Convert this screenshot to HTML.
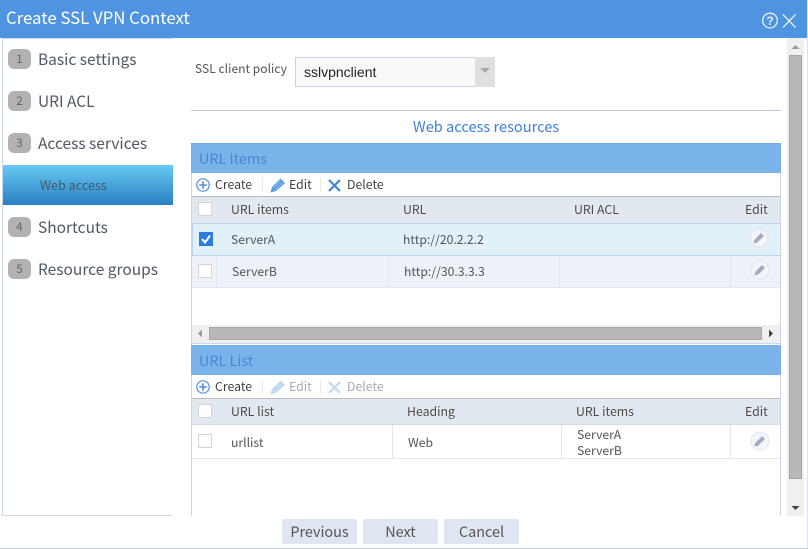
<!DOCTYPE html>
<html><head><meta charset="utf-8">
<style>
html,body{margin:0;padding:0;background:#fff;}
#p{position:relative;width:808px;height:549px;overflow:hidden;background:#fff;font-family:"Noto Sans CJK SC","Liberation Sans",sans-serif;color:#555;}
#p div,#p svg{position:absolute;}
.t{white-space:nowrap;line-height:20px;height:20px;}
.nav{font-size:15.5px;color:#4f5a66;left:38px;}
.b{left:8px;width:23px;height:20px;border-radius:6px;background:#b2b2b2;color:#666;font-size:12px;line-height:20px;text-align:center;}
.h{font-size:12.3px;color:#4c4c4c;}
.c{font-size:12.2px;color:#555;}
.tb{font-size:12.3px;color:#444;}
.dis{color:#aaa;}
.cb{width:12px;height:12px;border:1px solid #d5d5d5;background:#fff;}
.sep{width:1px;height:14px;background:#e8e8e8;}
.v{width:1px;background:#e2e5ea;}
.btn{top:519px;width:75px;height:25px;background:#dfe5f1;border-radius:2px;text-align:center;font-size:14.4px;line-height:26px;color:#555;}
</style></head><body><div id="p">

<div style="left:0;top:0;width:807px;height:38px;background:#4f94e0"></div>
<div style="left:807px;top:0;width:1px;height:549px;background:#dde3ee"></div>
<div class="t" style="left:6px;top:6px;font-size:16.8px;line-height:22px;height:22px;color:#fff">Create SSL VPN Context</div>
<svg style="left:761px;top:12px" width="36" height="17" viewBox="0 0 36 17">
<circle cx="9" cy="8.5" r="7.3" fill="none" stroke="#e6f0fb" stroke-width="1.3"/>
<text x="9" y="13" font-size="12" font-weight="bold" text-anchor="middle" fill="#e6f0fb" font-family="Liberation Sans">?</text>
<path d="M22 2.5L34.5 15.5M34.5 2.5L22 15.5" stroke="#fff" stroke-width="1.2" fill="none"/>
</svg>

<!-- left nav -->
<div style="left:2px;top:38px;width:171px;height:1px;background:#cfd6e6"></div>
<div style="left:2px;top:38px;width:1px;height:478px;background:#cfd6e6"></div>
<div style="left:2px;top:515px;width:171px;height:1px;background:#cfd6e6"></div>
<div class="b" style="top:49px">1</div><div class="t nav" style="top:49px">Basic settings</div>
<div class="b" style="top:91px">2</div><div class="t nav" style="top:91px">URI ACL</div>
<div class="b" style="top:133px">3</div><div class="t nav" style="top:133px">Access services</div>
<div style="left:3px;top:165px;width:170px;height:40px;background:linear-gradient(#68c9f3,#2a7fc2)"></div>
<div class="t" style="left:40px;top:175px;font-size:12.6px;color:#44586c">Web access</div>
<div class="b" style="top:217px">4</div><div class="t nav" style="top:217px">Shortcuts</div>
<div class="b" style="top:259px">5</div><div class="t nav" style="top:259px">Resource groups</div>

<!-- form -->
<div class="t" style="left:195px;top:59px;font-size:12.1px;color:#555">SSL client policy</div>
<div style="left:295px;top:57px;width:188px;height:28px;border:1px solid #c6d3e6;background:#f9f9f9"></div>
<div class="t" style="left:304px;top:62px;font-family:'Liberation Sans',sans-serif;font-size:14px;color:#222">sslvpnclient</div>
<div style="left:475px;top:57px;width:20px;height:30px;background:#e0e0e0"></div>
<svg style="left:479px;top:67px" width="12" height="8"><path d="M1 1H11L6 6Z" fill="#aaa"/></svg>
<div style="left:191px;top:110px;width:590px;height:1px;background:#b9cce4"></div>
<div class="t" style="left:191px;width:590px;text-align:center;top:117px;font-size:14.6px;color:#3f7fdc">Web access resources</div>

<!-- URL items panel -->
<div style="left:191px;top:143px;width:590px;height:30px;background:#7ab3ea;border-top:1px solid #72aae0;box-sizing:border-box"></div>
<div class="t" style="left:199px;top:149px;font-size:14.4px;color:#4a84d6">URL Items</div>
<div style="left:191px;top:173px;width:1px;height:172px;background:#cbd6ee"></div>
<div style="left:780px;top:173px;width:1px;height:172px;background:#cbd6ee"></div>
<div style="left:191px;top:343px;width:590px;height:1px;background:#cbd6ee"></div>

<svg style="left:196px;top:178px" width="14" height="14"><circle cx="7" cy="7" r="6.2" fill="none" stroke="#4f8fdc" stroke-width="1.2"/><path d="M7 3.2V10.8M3.2 7H10.8" stroke="#4f8fdc" stroke-width="1.6"/></svg>
<div class="t tb" style="left:215px;top:174px">Create</div>
<div class="sep" style="left:262px;top:178px"></div>
<svg style="left:270px;top:177px" width="16" height="16"><path d="M0.5 15.5L2 10L10.5 1.5L15 6L6 14Z" fill="#5a9ae0"/><path d="M3.5 10.5L10.5 3.5M5.5 12.5L12.5 5.5" stroke="#a8ccf0" stroke-width=".8"/></svg>
<div class="t tb" style="left:289px;top:174px">Edit</div>
<div class="sep" style="left:320px;top:178px"></div>
<svg style="left:328px;top:179px" width="13" height="13"><path d="M1 1L12 12M12 1L1 12" stroke="#3f86d8" stroke-width="2.2"/></svg>
<div class="t tb" style="left:347px;top:174px">Delete</div>

<div style="left:192px;top:196px;width:588px;height:27px;background:#e2e8ef;border-top:1px solid #bbb;box-sizing:border-box"></div>
<div class="cb" style="left:198px;top:202px"></div>
<div class="t h" style="left:231px;top:199px">URL items</div>
<div class="t h" style="left:403px;top:199px">URL</div>
<div class="t h" style="left:574px;top:199px">URI ACL</div>
<div class="t h" style="left:745px;top:199px">Edit</div>

<div style="left:192px;top:223px;width:588px;height:33px;background:#e2f0f9;border-top:1px solid #bcd5ee;border-bottom:1px solid #bcd5ee;border-left:1px solid #bcd5ee;box-sizing:border-box"></div>
<svg style="left:199px;top:232px" width="14" height="14"><rect width="14" height="14" fill="#2d7de0"/><path d="M3 7L6 10.5L11 3.5" stroke="#fff" stroke-width="2" fill="none"/></svg>
<div class="t c" style="left:231px;top:229px">ServerA</div>
<div class="t c" style="left:403px;top:229px">http://20.2.2.2</div>
<svg style="left:749px;top:228px" width="20" height="20"><circle cx="10" cy="10" r="9" fill="#f3f5f9" stroke="#e2e5ee"/><path d="M4.5 15.5L5.2 12L12 5L15 8L8 14.8Z" fill="#a4acc8"/></svg>

<div style="left:192px;top:256px;width:588px;height:32px;background:#eef1f8;border-bottom:1px solid #e4e7ee;box-sizing:border-box"></div>
<div class="v" style="left:216px;top:256px;height:32px"></div>
<div class="v" style="left:388px;top:256px;height:32px"></div>
<div class="v" style="left:559px;top:256px;height:32px"></div>
<div class="v" style="left:730px;top:256px;height:32px"></div>
<div class="cb" style="left:198px;top:264px"></div>
<div class="t c" style="left:232px;top:261px">ServerB</div>
<div class="t c" style="left:404px;top:261px">http://30.3.3.3</div>
<svg style="left:750px;top:260px" width="20" height="20"><circle cx="10" cy="10" r="9" fill="#f3f5f9" stroke="#e2e5ee"/><path d="M4.5 15.5L5.2 12L12 5L15 8L8 14.8Z" fill="#a4acc8"/></svg>

<div style="left:192px;top:325px;width:588px;height:18px;background:#f0f0f0"></div>
<div style="left:209px;top:327px;width:553px;height:13px;background:#b8b8b8;border:1px solid #a6a6a6;box-sizing:border-box"></div>
<svg style="left:197px;top:329px" width="7" height="9"><path d="M5 .5V8.5L1 4.5Z" fill="#999"/></svg>
<svg style="left:768px;top:329px" width="7" height="9"><path d="M1 .5V8.5L5 4.5Z" fill="#444"/></svg>

<!-- URL list panel -->
<div style="left:191px;top:345px;width:590px;height:30px;background:#7ab3ea"></div>
<div class="t" style="left:199px;top:351px;font-size:14.4px;color:#4a84d6">URL List</div>
<div style="left:191px;top:375px;width:1px;height:141px;background:#cbd6ee"></div>
<div style="left:780px;top:375px;width:1px;height:141px;background:#cbd6ee"></div>

<svg style="left:196px;top:380px" width="14" height="14"><circle cx="7" cy="7" r="6.2" fill="none" stroke="#4f8fdc" stroke-width="1.2"/><path d="M7 3.2V10.8M3.2 7H10.8" stroke="#4f8fdc" stroke-width="1.6"/></svg>
<div class="t tb" style="left:215px;top:376px">Create</div>
<div class="sep" style="left:262px;top:380px"></div>
<svg style="left:270px;top:379px" width="16" height="16"><path d="M0.5 15.5L2 10L10.5 1.5L15 6L6 14Z" fill="#c3d9f0"/></svg>
<div class="t tb dis" style="left:289px;top:376px">Edit</div>
<div class="sep" style="left:320px;top:380px"></div>
<svg style="left:328px;top:381px" width="13" height="13"><path d="M1 1L12 12M12 1L1 12" stroke="#c3d9f0" stroke-width="2.2"/></svg>
<div class="t tb dis" style="left:347px;top:376px">Delete</div>

<div style="left:192px;top:398px;width:588px;height:27px;background:#e2e8ef;border-top:1px solid #bbb;border-bottom:1px solid #d4dcea;box-sizing:border-box"></div>
<div class="cb" style="left:198px;top:404px"></div>
<div class="t h" style="left:231px;top:401px">URL list</div>
<div class="t h" style="left:407px;top:401px">Heading</div>
<div class="t h" style="left:576px;top:401px">URL items</div>
<div class="t h" style="left:745px;top:401px">Edit</div>

<div style="left:192px;top:458px;width:588px;height:1px;background:#e6e8ec"></div>
<div class="v" style="left:392px;top:425px;height:33px"></div>
<div class="v" style="left:561px;top:425px;height:33px"></div>
<div class="v" style="left:730px;top:425px;height:33px"></div>
<div class="cb" style="left:198px;top:434px"></div>
<div class="t c" style="left:231px;top:432px">urllist</div>
<div class="t c" style="left:408px;top:432px">Web</div>
<div class="t c" style="left:577px;top:427px;line-height:15px">ServerA</div>
<div class="t c" style="left:577px;top:443px;line-height:15px">ServerB</div>
<svg style="left:750px;top:431px" width="20" height="20"><circle cx="10" cy="10" r="9" fill="#f3f5f9" stroke="#e2e5ee"/><path d="M4.5 15.5L5.2 12L12 5L15 8L8 14.8Z" fill="#a4acc8"/></svg>

<!-- right scrollbar -->
<div style="left:787px;top:38px;width:17px;height:478px;background:#f0f0f0"></div>
<div style="left:789px;top:55px;width:13px;height:424px;background:#b8b8b8;border:1px solid #a6a6a6;box-sizing:border-box"></div>
<svg style="left:791px;top:44px" width="9" height="6"><path d="M.5 5H8.5L4.5 1Z" fill="#999"/></svg>
<svg style="left:791px;top:505px" width="9" height="6"><path d="M.5 1H8.5L4.5 5Z" fill="#444"/></svg>

<!-- footer -->
<div class="btn" style="left:282px">Previous</div>
<div class="btn" style="left:363px">Next</div>
<div class="btn" style="left:444px">Cancel</div>
<div style="left:0;top:548px;width:808px;height:1px;background:#c4c9d2"></div>

</div></body></html>
